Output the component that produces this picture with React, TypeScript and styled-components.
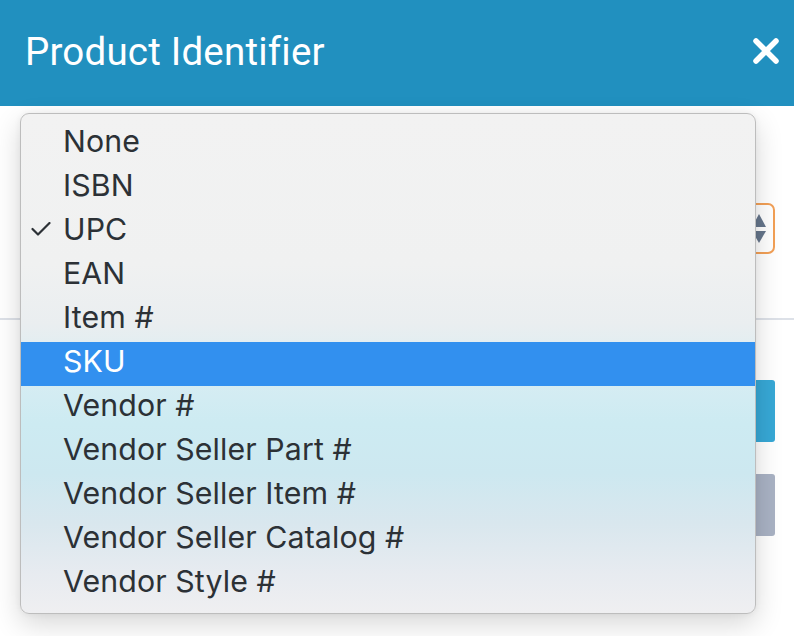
import React from "react";
import styled, { createGlobalStyle } from "styled-components";

const Global = createGlobalStyle`
  html, body { margin: 0; padding: 0; }
  body { width: 794px; height: 636px; overflow: hidden; background: #ffffff; }
  * { box-sizing: border-box; }
`;

const Page = styled.div`
  position: relative;
  width: 794px;
  height: 636px;
  display: flex;
  flex-direction: column;
  background: #ffffff;
  font-family: "Roboto", "Liberation Sans", sans-serif;
`;

const Header = styled.header`
  height: 106px;
  flex: none;
  background: #2190bf;
  display: flex;
  align-items: center;
  justify-content: space-between;
  padding: 0 14px 4px 25px;
`;

const Title = styled.h1`
  margin: 0;
  font-family: "Roboto", sans-serif;
  font-weight: 400;
  font-size: 38.5px;
  color: #ffffff;
  letter-spacing: 0.2px;
`;

const CloseButton = styled.button`
  border: 0;
  background: transparent;
  padding: 0;
  width: 28px;
  height: 28px;
  display: flex;
  cursor: pointer;
`;

const Body = styled.div`
  flex: 1;
  display: flex;
  flex-direction: column;
  padding: 97px 19px 0 40px;
`;

const SelectBox = styled.div`
  height: 51px;
  border: 2px solid #f3a056;
  border-radius: 7px;
  display: flex;
  align-items: center;
  justify-content: flex-end;
  padding-right: 6px;
`;

const Divider = styled.hr`
  margin: 64px -19px 0 -40px;
  border: 0;
  border-top: 2px solid #dde1e8;
`;

const Actions = styled.div`
  display: flex;
  flex-direction: column;
  align-items: flex-end;
  gap: 32px;
  margin-top: 60px;
`;

const ActionButton = styled.button<{ $tone: "primary" | "muted" }>`
  width: 200px;
  height: 62px;
  border: 0;
  border-radius: 3px;
  background: ${(p) => (p.$tone === "primary" ? "#37a8d6" : "#a9b2c4")};
  color: #fff;
  font-size: 20px;
`;

const Menu = styled.div`
  position: absolute;
  left: 20px;
  top: 113px;
  width: 736px;
  height: 501px;
  border: 1px solid #bdbdbd;
  border-radius: 9px;
  padding: 8px 0 6px;
  overflow: hidden;
  box-shadow: 0 10px 28px rgba(0, 0, 0, 0.16), 0 0 6px rgba(0, 0, 0, 0.06);
  background: linear-gradient(
    180deg,
    #f2f2f2 0%,
    #f0f1f1 30%,
    #eaeef0 42%,
    #d8edf3 52%,
    #cdebf2 62%,
    #cde8f0 72%,
    #d9e7ee 82%,
    #e7ebf0 92%,
    #efeff1 100%
  );
  font-family: "Inter", "Liberation Sans", sans-serif;
`;

const Item = styled.div<{ $active?: boolean }>`
  position: relative;
  height: 44px;
  display: flex;
  align-items: center;
  padding: 0 0 7px 42px;
  font-size: 30.3px;
  letter-spacing: 0.1px;
  color: ${(p) => (p.$active ? "#ffffff" : "#2c3136")};
  background: ${(p) => (p.$active ? "#3290ef" : "transparent")};
`;

const Check = styled.svg`
  position: absolute;
  left: 10px;
  top: 12px;
`;

const items = [
  "None",
  "ISBN",
  "UPC",
  "EAN",
  "Item #",
  "SKU",
  "Vendor #",
  "Vendor Seller Part #",
  "Vendor Seller Item #",
  "Vendor Seller Catalog #",
  "Vendor Style #",
];

export default function App() {
  return (
    <>
      <Global />
      <Page>
        <Header>
          <Title>Product Identifier</Title>
          <CloseButton aria-label="Close">
            <svg width="28" height="28" viewBox="0 0 28 28">
              <path d="M4 4 L24 24 M24 4 L4 24" stroke="#fff" strokeWidth="5.5" strokeLinecap="round" />
            </svg>
          </CloseButton>
        </Header>
        <Body>
          <SelectBox>
            <svg width="16" height="32" viewBox="0 0 16 32">
              <path d="M1 22 L8 9 L15 22 Z" fill="#66768c" transform="translate(0,-8)" />
              <path d="M1 18 L15 18 L8 30 Z" fill="#66768c" />
            </svg>
          </SelectBox>
          <Divider />
          <Actions>
            <ActionButton $tone="primary" />
            <ActionButton $tone="muted" />
          </Actions>
        </Body>
        <Menu>
          {items.map((label) => (
            <Item key={label} $active={label === "SKU"}>
              {label === "UPC" && (
                <Check width="20" height="14" viewBox="0 0 20 14">
                  <path d="M1.5 7 L7 12.5 L18.5 1" fill="none" stroke="#2c3136" strokeWidth="2.2" strokeLinecap="round" strokeLinejoin="round" />
                </Check>
              )}
              {label}
            </Item>
          ))}
        </Menu>
      </Page>
    </>
  );
}
